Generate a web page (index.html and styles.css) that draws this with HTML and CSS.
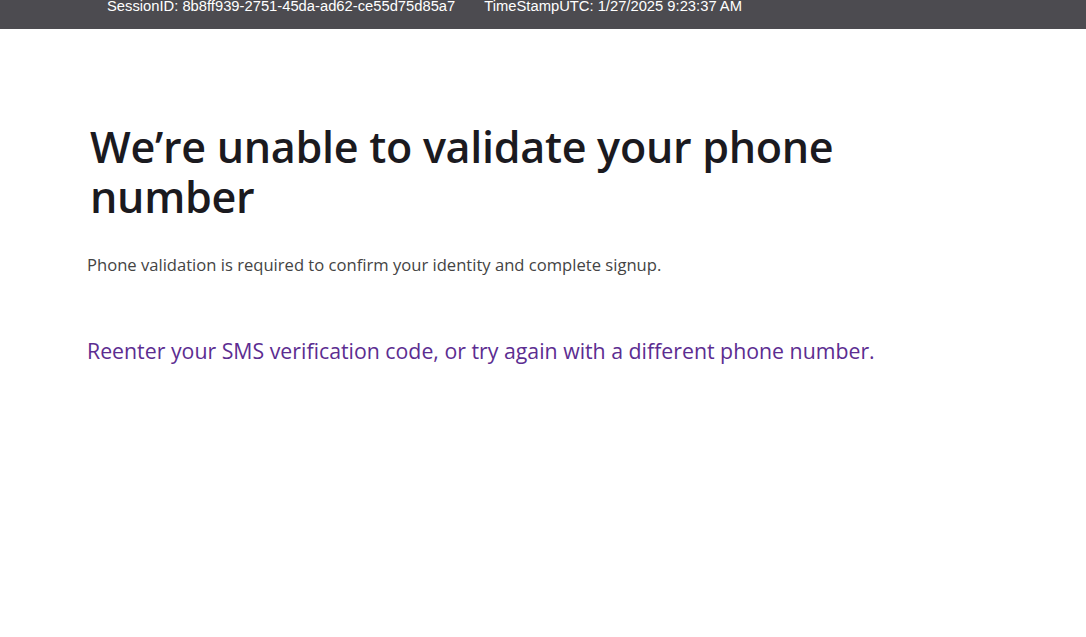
FILE: index.html
```html
<!DOCTYPE html>
<html lang="en">
<head>
<meta charset="utf-8">
<title>Phone validation</title>
<link rel="stylesheet" href="styles.css">
</head>
<body>
<div class="topbar">
  <span class="meta">SessionID: 8b8ff939-2751-45da-ad62-ce55d75d85a7</span>
  <span class="meta">TimeStampUTC: 1/27/2025 9:23:37 AM</span>
</div>
<main class="content">
  <h1 class="title">We’re unable to validate your phone number</h1>
  <p class="desc">Phone validation is required to confirm your identity and complete signup.</p>
  <p class="action">Reenter your SMS verification code, or try again with a different phone number.</p>
</main>
</body>
</html>
```
FILE: styles.css
```css
html, body {
  margin: 0;
  padding: 0;
  background: #ffffff;
  font-family: "Open Sans", "Noto Sans", "Liberation Sans", sans-serif;
}
.topbar {
  height: 29px;
  background: #4c4b50;
  display: flex;
  gap: 29px;
  padding-left: 107px;
  align-items: flex-start;
}
.meta {
  color: #ffffff;
  font-family: "Liberation Sans", sans-serif;
  font-size: 14.75px;
  line-height: 15px;
  margin-top: -1px;
}
.content {
  padding: 93px 0 0 87px;
}
.title {
  margin: 0 0 0 3px;
  font-size: 43.1px;
  font-weight: 600;
  line-height: 50px;
  color: #1b1a1f;
  max-width: 760px;
  letter-spacing: -0.3px;
}
.desc {
  margin: 32px 0 0 0;
  font-size: 16.6px;
  line-height: 22px;
  color: #444444;
}
.action {
  margin: 61px 0 0 0;
  font-size: 21.3px;
  line-height: 27px;
  color: #5c2d91;
}
```
